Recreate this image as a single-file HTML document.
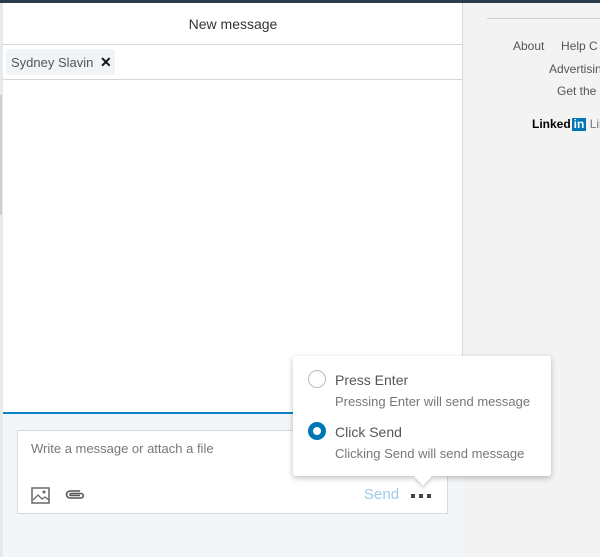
<!DOCTYPE html>
<html><head><style>
*{margin:0;padding:0;box-sizing:border-box}
body{width:600px;height:557px;overflow:hidden;background:#f3f3f3;font-family:"Liberation Sans",sans-serif;position:relative}
.abs{position:absolute}
</style></head><body>
<div class="abs" style="left:0;top:0;width:600px;height:3px;background:#2b3d49"></div>
<div class="abs" style="left:0;top:3px;width:3px;height:554px;background:#e9e9e9"></div>
<div class="abs" style="left:0;top:95px;width:2px;height:120px;background:#cfcfcf"></div>
<div class="abs" style="left:3px;top:3px;width:460px;height:554px;background:#fff;border-right:1px solid #d9d9d9"></div>
<div class="abs" style="left:3px;top:16px;width:460px;text-align:center;font-size:14px;color:#333">New message</div>
<div class="abs" style="left:3px;top:44px;width:460px;height:1px;background:#d6d6d6"></div>
<div class="abs" style="left:6px;top:49px;width:109px;height:26px;background:#f1f4f7;border-radius:3px;font-size:13px;color:#555;padding:5px 0 0 5px">Sydney Slavin <b style="color:#111;font-size:14px;margin-left:3px">✕</b></div>
<div class="abs" style="left:3px;top:79px;width:460px;height:1px;background:#d6d6d6"></div>
<div class="abs" style="left:3px;top:412px;width:460px;height:2px;background:#0a84c4"></div>
<div class="abs" style="left:3px;top:414px;width:460px;height:143px;background:#f3f6f8"></div>
<div class="abs" style="left:17px;top:430px;width:431px;height:84px;background:#fff;border:1px solid #dadada"></div>
<div class="abs" style="left:31px;top:441px;font-size:13px;color:#777">Write a message or attach a file</div>
<svg class="abs" style="left:31px;top:487px" width="19" height="17" viewBox="0 0 19 17"><rect x="1" y="1" width="17" height="15" fill="none" stroke="#666" stroke-width="1.5"/><path d="M2 13l5-5 4 4 3-2 4 3" fill="none" stroke="#666" stroke-width="1.3"/><circle cx="13" cy="5" r="1.5" fill="#666"/></svg>
<svg class="abs" style="left:64px;top:488px" width="22" height="13" viewBox="0 0 22 13"><path d="M16 3H6a3.5 3.5 0 0 0 0 7h11a2.2 2.2 0 0 0 0-4.5H7a1 1 0 0 0 0 2h9" fill="none" stroke="#555" stroke-width="1.6"/></svg>
<div class="abs" style="left:364px;top:486px;font-size:15px;color:#9ccbe8">Send</div>
<div class="abs" style="left:411px;top:494px;width:4px;height:4px;background:#444"></div>
<div class="abs" style="left:419px;top:494px;width:4px;height:4px;background:#444"></div>
<div class="abs" style="left:427px;top:494px;width:4px;height:4px;background:#444"></div>
<div class="abs" style="left:293px;top:356px;width:258px;height:120px;background:#fff;border-radius:3px;box-shadow:0 2px 6px rgba(0,0,0,.25)"></div>
<div class="abs" style="left:417px;top:471px;width:12px;height:12px;background:#fff;transform:rotate(45deg);box-shadow:2px 2px 3px rgba(0,0,0,.15)"></div>
<div class="abs" style="left:413px;top:466px;width:20px;height:10px;background:#fff"></div>
<div class="abs" style="left:308px;top:370px;width:18px;height:18px;border:1.5px solid #bbb;border-radius:50%"></div>
<div class="abs" style="left:335px;top:372px;font-size:14px;color:#555">Press Enter</div>
<div class="abs" style="left:335px;top:394px;font-size:13px;color:#777">Pressing Enter will send message</div>
<div class="abs" style="left:308px;top:422px;width:18px;height:18px;border:5px solid #0077b5;border-radius:50%"></div>
<div class="abs" style="left:335px;top:424px;font-size:14px;color:#555">Click Send</div>
<div class="abs" style="left:335px;top:446px;font-size:13px;color:#777">Clicking Send will send message</div>
<div class="abs" style="left:487px;top:18px;width:113px;height:1px;background:#d0d0d0"></div>
<div class="abs" style="left:513px;top:39px;font-size:12px;color:#555;white-space:nowrap">About &nbsp;&nbsp;&nbsp;&nbsp;Help C</div>
<div class="abs" style="left:549px;top:62px;font-size:12px;color:#555;white-space:nowrap">Advertisin</div>
<div class="abs" style="left:557px;top:84px;font-size:12px;color:#555;white-space:nowrap">Get the L</div>
<div class="abs" style="left:532px;top:117px;font-size:12px;font-weight:bold;color:#000;white-space:nowrap">Linked<span style="display:inline-block;background:#0077b5;color:#fff;padding:0 2px;margin-left:1px;line-height:13px">in</span> <span style="font-weight:normal;color:#777">Lin</span></div>
</body></html>
